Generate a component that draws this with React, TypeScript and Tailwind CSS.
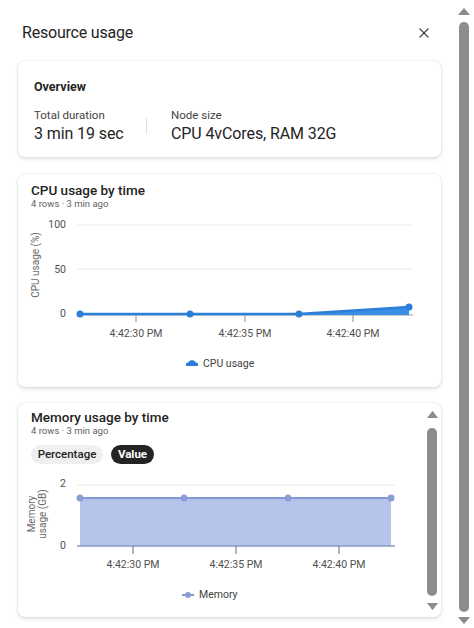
import React from "react";

const FONT = { fontFamily: "Roboto, 'Noto Sans', Arial, sans-serif" };

function Arrow({ up, w = 12, h = 7 }: { up?: boolean; w?: number; h?: number }) {
  return (
    <svg width={w} height={h} viewBox={`0 0 ${w} ${h}`} className="block">
      {up ? (
        <path d={`M${w / 2} 0.5 L${w - 0.5} ${h} L0.5 ${h} Z`} fill="#8c8c8c" strokeLinejoin="round" stroke="#8c8c8c" strokeWidth="1" />
      ) : (
        <path d={`M0.5 0 L${w - 0.5} 0 L${w / 2} ${h - 0.5} Z`} fill="#8c8c8c" strokeLinejoin="round" stroke="#8c8c8c" strokeWidth="1" />
      )}
    </svg>
  );
}

function CpuChart() {
  const pts: [number, number][] = [
    [62, 104],
    [172, 104],
    [281, 104],
    [391, 97],
  ];
  const line = pts.map((p, i) => `${i ? "L" : "M"}${p[0]} ${p[1]}`).join(" ");
  const area = `${line} L391 105 L62 105 Z`;
  return (
    <svg width={423} height={170} className="block" style={FONT}>
      <line x1={59} x2={395} y1={15} y2={15} stroke="#ececec" />
      <line x1={59} x2={395} y1={59} y2={59} stroke="#ececec" />
      <line x1={59} x2={395} y1={105} y2={105} stroke="#9a9a9a" />
      {[118, 227, 335].map((x) => (
        <line key={x} x1={x} x2={x} y1={105} y2={112} stroke="#8a8a8a" />
      ))}
      <g fontSize={10.5} fill="#505050" textAnchor="end">
        <text x={48} y={18}>100</text>
        <text x={48} y={63}>50</text>
        <text x={48} y={107}>0</text>
      </g>
      <text transform="translate(18,55) rotate(-90)" textAnchor="middle" fontSize={10} fill="#6a6a6a" dy={3}>
        CPU usage (%)
      </text>
      <path d={area} fill="#3a8ee6" />
      <path d={line} fill="none" stroke="#2b7fd8" strokeWidth={2.5} />
      {pts.map((p) => (
        <circle key={p[0]} cx={p[0]} cy={p[1]} r={3.5} fill="#2b7fd8" />
      ))}
      <g fontSize={10.5} fill="#505050" textAnchor="middle">
        <text x={118} y={127}>4:42:30 PM</text>
        <text x={227} y={127}>4:42:35 PM</text>
        <text x={335} y={127}>4:42:40 PM</text>
      </g>
      <path d="M168 156 L168 153.5 Q170 152.5 171 151.5 Q174 148.5 177 151.5 Q178 152.5 180 153.5 L180 156 Z" fill="#2b7fd8" />
      <text x={185} y={157} fontSize={10.5} fill="#424242">CPU usage</text>
    </svg>
  );
}

function MemChart() {
  const pts: [number, number][] = [
    [62, 34],
    [166, 34],
    [270, 34],
    [373, 34],
  ];
  return (
    <svg width={392} height={147} className="block" style={FONT}>
      <line x1={59} x2={377} y1={21} y2={21} stroke="#ececec" />
      <rect x={62} y={34} width={311} height={48} fill="#b6c3ea" />
      <line x1={59} x2={377} y1={82} y2={82} stroke="#8e99c2" strokeWidth={1.5} />
      <line x1={62} x2={373} y1={34} y2={34} stroke="#8396d4" strokeWidth={2} />
      {pts.map((p) => (
        <circle key={p[0]} cx={p[0]} cy={p[1]} r={3.5} fill="#8c9dd6" />
      ))}
      {[115, 218, 321].map((x) => (
        <line key={x} x1={x} x2={x} y1={82} y2={90} stroke="#6a6a6a" />
      ))}
      <g fontSize={10.5} fill="#505050" textAnchor="end">
        <text x={48} y={23}>2</text>
        <text x={48} y={85}>0</text>
      </g>
      <text transform="translate(19,50) rotate(-90)" textAnchor="middle" fontSize={10} fill="#6a6a6a">
        <tspan x={0} y={-2}>Memory</tspan>
        <tspan x={0} y={9}>usage (GB)</tspan>
      </text>
      <g fontSize={10.5} fill="#505050" textAnchor="middle">
        <text x={115} y={104}>4:42:30 PM</text>
        <text x={218} y={104}>4:42:35 PM</text>
        <text x={321} y={104}>4:42:40 PM</text>
      </g>
      <line x1={164} x2={176} y1={131} y2={131} stroke="#8396d4" strokeWidth={2} />
      <circle cx={170} cy={131} r={3} fill="#8c9dd6" />
      <text x={181} y={134} fontSize={10.5} fill="#424242">Memory</text>
    </svg>
  );
}

const card =
  "rounded-[7px] bg-white shadow-[0_0_2px_rgba(0,0,0,0.12),0_2px_4px_rgba(0,0,0,0.12)]";

export default function App() {
  return (
    <div className="w-[474px] h-[628px] bg-white flex overflow-hidden text-[#242424]" style={FONT}>
      <div className="flex-1 pl-[18px] pr-[18px] flex flex-col">
        <div className="mt-[20px] h-[26px] flex items-center justify-between pl-[4px] pr-[12px]">
          <span className="text-[16px] leading-[26px] tracking-[-0.2px]">Resource usage</span>
          <svg width={10} height={10} viewBox="0 0 10 10">
            <path d="M0.5 0.5 L9.5 9.5 M9.5 0.5 L0.5 9.5" stroke="#424242" strokeWidth={1.1} />
          </svg>
        </div>

        <div className={`${card} mt-[15px] h-[96px] pl-[16px] pt-[17px]`}>
          <div className="text-[12.5px] leading-[18px] font-bold">Overview</div>
          <div className="mt-[12px] flex items-start">
            <div className="w-[112px]">
              <div className="text-[11.5px] leading-[15px] text-[#424242]">Total duration</div>
              <div className="text-[16px] leading-[21px] tracking-[-0.1px]">3 min 19 sec</div>
            </div>
            <div className="w-px h-[16px] bg-[#e0e0e0] mt-[10px]" />
            <div className="pl-[24px]">
              <div className="text-[11.5px] leading-[15px] text-[#424242]">Node size</div>
              <div className="text-[16px] leading-[21px] tracking-[-0.1px]">CPU 4vCores, RAM 32G</div>
            </div>
          </div>
        </div>

        <div className={`${card} mt-[17px] pt-[8px] pb-[7px]`}>
          <div className="pl-[13px] text-[13.5px] leading-[16px] font-medium">CPU usage by time</div>
          <div className="pl-[13px] text-[9.5px] leading-[12px] text-[#616161]">4 rows · 3 min ago</div>
          <CpuChart />
        </div>

        <div className={`${card} mt-[16px] flex`}>
          <div className="flex-1 pt-[6px]">
            <div className="pl-[13px] text-[13.5px] leading-[16px] font-medium">Memory usage by time</div>
            <div className="pl-[13px] text-[9.5px] leading-[12px] text-[#616161]">4 rows · 3 min ago</div>
            <div className="pl-[13px] mt-[8px] flex gap-[8px]">
              <span className="h-[19px] w-[72px] rounded-full bg-[#efefef] text-[11.5px] font-medium leading-[19px] text-center">
                Percentage
              </span>
              <span className="h-[19px] w-[43px] rounded-full bg-[#242424] text-white text-[11.5px] font-bold leading-[19px] text-center">
                Value
              </span>
            </div>
            <MemChart />
          </div>
          <div className="w-[10px] mr-[4px] pt-[8px] pb-[7px] flex flex-col items-center">
            <Arrow up w={11} h={7} />
            <div className="mt-[10px] w-[10px] h-[168px] rounded-full bg-[#8c8c8c]" />
            <div className="mt-[7px]">
              <Arrow w={11} h={7} />
            </div>
          </div>
        </div>
      </div>

      <div className="w-[10px] mr-[5px] pt-[8px] flex flex-col items-center">
        <Arrow up w={12} h={7} />
        <div className="mt-[7px] w-[10px] h-[590px] rounded-full bg-[#8c8c8c]" />
        <div className="mt-[5px]">
          <Arrow w={12} h={7} />
        </div>
      </div>
    </div>
  );
}
